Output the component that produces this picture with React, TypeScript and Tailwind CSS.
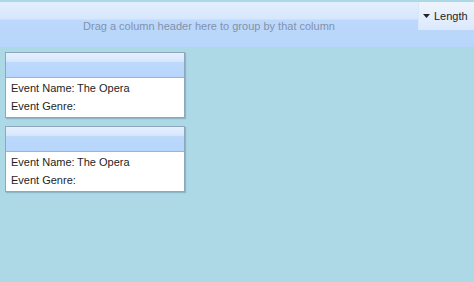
import React from "react";

function Card() {
  return (
    <div className="w-[180px] border border-[#8fa6bf] bg-white shadow-[1px_1px_1px_rgba(90,120,150,0.35)]">
      <div className="h-[25px] border-b border-[#9bb5d0] bg-[linear-gradient(to_bottom,#e6f0fd_0%,#d6e7fd_35%,#bcd9fb_40%,#b7d6fb_100%)]" />
      <div className="px-[5px] pt-[1px] pb-[2px] text-[11px] leading-[18px] text-[#1e1e1e] whitespace-nowrap">
        <div className="flex">
          <span className="w-[66px]">Event Name:</span>
          <span>The Opera</span>
        </div>
        <div className="flex">
          <span className="w-[66px]">Event Genre:</span>
        </div>
      </div>
    </div>
  );
}

export default function App() {
  return (
    <div
      className="w-[474px] h-[282px] bg-[#add8e6] overflow-hidden"
      style={{ fontFamily: "'Liberation Sans', Arial, sans-serif" }}
    >
      <div className="pt-[2px]">
        <div className="h-[45px] flex bg-[linear-gradient(to_bottom,#e3eefc_0%,#d6e7fd_38%,#bcd8fb_40%,#b8d6fb_100%)]">
          <div className="flex-1 flex items-center justify-center pt-[3px] text-[11px] text-[#8293aa] whitespace-nowrap">
            Drag a column header here to group by that column
          </div>
          <div className="w-[56px] h-[28px] border-l border-[#d8e6f7] flex items-center pl-[4px] gap-[4px] text-[11px] text-[#1e1e1e] bg-[linear-gradient(to_bottom,#eef4fd,#dbe9fc)] whitespace-nowrap">
            <svg width="7" height="4" viewBox="0 0 7 4" className="shrink-0">
              <path d="M0 0H7L3.5 4Z" fill="#222" />
            </svg>
            <span>Length</span>
          </div>
        </div>
      </div>
      <div className="pl-[5px] pt-[5px] flex flex-col gap-[8px]">
        <Card />
        <Card />
      </div>
    </div>
  );
}
